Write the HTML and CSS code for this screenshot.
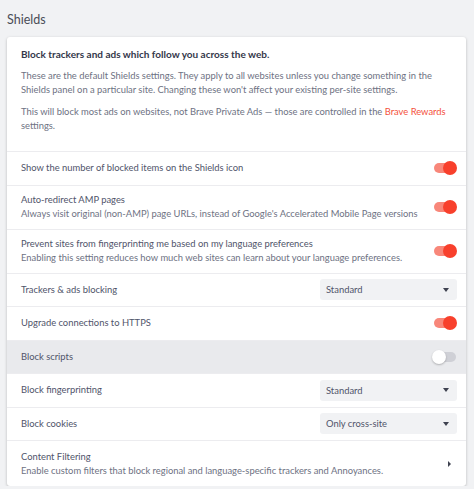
FILE: index.html
```html
<!DOCTYPE html>
<html>
<head>
<meta charset="utf-8">
<link rel="stylesheet" href="styles.css">
</head>
<body>
<div class="page">
  <h1 class="page-title">Shields</h1>
  <div class="card">
    <div class="intro">
      <div class="intro-title">Block trackers and ads which follow you across the web.</div>
      <p class="intro-text">These are the default Shields settings. They apply to all websites unless you change something in the Shields panel on a particular site. Changing these won't affect your existing per-site settings.</p>
      <p class="intro-text">This will block most ads on websites, not Brave Private Ads — those are controlled in the <span class="link">Brave Rewards</span> settings.</p>
    </div>
    <div class="row">
      <div class="label"><div class="main">Show the number of blocked items on the Shields icon</div></div>
      <span class="toggle on"><span class="knob"></span></span>
    </div>
    <div class="row two">
      <div class="label"><div class="main">Auto-redirect AMP pages</div><div class="sub">Always visit original (non-AMP) page URLs, instead of Google's Accelerated Mobile Page versions</div></div>
      <span class="toggle on"><span class="knob"></span></span>
    </div>
    <div class="row two">
      <div class="label"><div class="main">Prevent sites from fingerprinting me based on my language preferences</div><div class="sub">Enabling this setting reduces how much web sites can learn about your language preferences.</div></div>
      <span class="toggle on"><span class="knob"></span></span>
    </div>
    <div class="row">
      <div class="label"><div class="main">Trackers &amp; ads blocking</div></div>
      <div class="select"><span>Standard</span><span class="caret"></span></div>
    </div>
    <div class="row">
      <div class="label"><div class="main">Upgrade connections to HTTPS</div></div>
      <span class="toggle on"><span class="knob"></span></span>
    </div>
    <div class="row hover">
      <div class="label"><div class="main">Block scripts</div></div>
      <span class="toggle off"><span class="knob"></span></span>
    </div>
    <div class="row">
      <div class="label"><div class="main">Block fingerprinting</div></div>
      <div class="select"><span>Standard</span><span class="caret"></span></div>
    </div>
    <div class="row">
      <div class="label"><div class="main">Block cookies</div></div>
      <div class="select"><span>Only cross-site</span><span class="caret"></span></div>
    </div>
    <div class="row two last">
      <div class="label"><div class="main">Content Filtering</div><div class="sub">Enable custom filters that block regional and language-specific trackers and Annoyances.</div></div>
      <span class="arrow"></span>
    </div>
  </div>
</div>
</body>
</html>
```

FILE: styles.css
```css
html, body {
  margin: 0;
  padding: 0;
  background: #f1f2f4;
}
body {
  font-family: Lato, "Noto Sans", sans-serif;
  color: #3b3e4f;
}
.page {
  padding: 0 8px 0 7px;
}
.page-title {
  margin: 0;
  height: 37px;
  line-height: 39px;
  font-size: 12.5px;
  font-weight: 400;
  color: #4a4d57;
}
.card {
  background: #fff;
  border-radius: 3px;
  box-shadow: 0 1px 3px rgba(0,0,0,0.25);
  overflow: hidden;
}
.intro {
  padding: 10px 14px 18px;
}
.intro-title {
  font-size: 10px;
  font-weight: 700;
  line-height: 14px;
  color: #34374a;
}
.intro-text {
  margin: 8px 0 0;
  font-size: 9.4px;
  line-height: 14px;
  color: #6e7283;
}
.link {
  color: #f4513c;
}
.row {
  display: flex;
  align-items: center;
  justify-content: space-between;
  min-height: 33.5px;
  padding: 0 9px 0 14px;
  border-top: 1px solid #ececef;
  box-sizing: border-box;
}
.row.two {
  min-height: 44px;
}
.row.last {
  min-height: 46px;
}
.row.hover {
  background: #e9eaed;
}
.label {
  font-size: 9.4px;
  line-height: 14px;
  color: #50546a;
}
.label .sub {
  color: #6e7283;
}
.toggle {
  position: relative;
  width: 22px;
  height: 10px;
  border-radius: 5px;
  margin-right: 1px;
  flex: none;
}
.toggle.on {
  background: #f8877a;
}
.toggle.off {
  background: #cfd0d6;
}
.knob {
  position: absolute;
  top: -2px;
  width: 14px;
  height: 14px;
  border-radius: 50%;
}
.toggle.on .knob {
  right: -1px;
  background: #f8402c;
}
.toggle.off .knob {
  left: -2px;
  background: #fff;
  box-shadow: 0 1px 2px rgba(0,0,0,0.25);
}
.select {
  width: 137px;
  height: 21px;
  box-sizing: border-box;
  display: flex;
  align-items: center;
  justify-content: space-between;
  padding: 0 8px 0 6px;
  background: #f1f2f4;
  border-radius: 3px;
  font-size: 9.4px;
  color: #50546a;
  flex: none;
}
.caret {
  width: 0;
  height: 0;
  border-left: 3.5px solid transparent;
  border-right: 3.5px solid transparent;
  border-top: 4px solid #3f4250;
}
.arrow {
  width: 0;
  height: 0;
  border-top: 3px solid transparent;
  border-bottom: 3px solid transparent;
  border-left: 3.5px solid #3f4250;
  margin-right: 6px;
}
```
